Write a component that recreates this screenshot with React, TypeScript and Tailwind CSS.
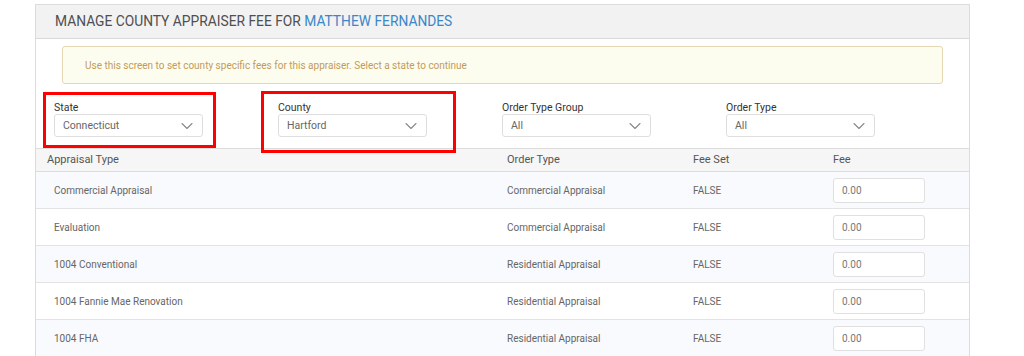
import { ChevronDown } from 'lucide-react';

const FILTERS = [
    { label: 'State', value: 'Connecticut', mark: 'state' },
    { label: 'County', value: 'Hartford', mark: 'county' },
    { label: 'Order Type Group', value: 'All', mark: '' },
    { label: 'Order Type', value: 'All', mark: '' },
];

const ROWS = [
    { type: 'Commercial Appraisal', order: 'Commercial Appraisal' },
    { type: 'Evaluation', order: 'Commercial Appraisal' },
    { type: '1004 Conventional', order: 'Residential Appraisal' },
    { type: '1004 Fannie Mae Renovation', order: 'Residential Appraisal' },
    { type: '1004 FHA', order: 'Residential Appraisal' },
];

export default function App() {
    return (
        <div className="w-[1024px] h-[356px] bg-white overflow-hidden pt-[4px] pl-[35px]" style={{ fontFamily: 'Roboto, "Liberation Sans", sans-serif' }}>
            <div className="w-[935px] border border-[#dcdcdc] border-b-0">

                {/* Header */}
                <div className="h-[34px] bg-[#f2f2f2] border-b border-[#d9d9d9] flex items-center pl-[19px]">
                    <h1 className="text-[13.8px] text-[#4f4f4f] uppercase">
                        Manage County Appraiser Fee For <span className="text-[#3a87c8]">Matthew Fernandes</span>
                    </h1>
                </div>

                {/* Info */}
                <div className="mx-[26px] mt-[7px] h-[38px] rounded-[3px] bg-[#fdfdef] border border-[#e6d6b4] flex items-center pl-[22px]">
                    <p className="text-[10px] text-[#c29b5a]">
                        Use this screen to set county specific fees for this appraiser. Select a state to continue
                    </p>
                </div>

                {/* Filters */}
                <div className="flex pl-[18px] pt-[17px] pb-[11px]">
                    {FILTERS.map((f) => (
                        <div key={f.label} className="relative w-[224px]">
                            <label className="block text-[10.5px] text-[#333] leading-[13px]">{f.label}</label>
                            <div className="w-[149px] h-[23px] border border-[#dedede] rounded-[3px] bg-white flex items-center justify-between pl-[8px] pr-[5px]">
                                <span className="text-[10.5px] text-[#666]">{f.value}</span>
                                <ChevronDown size={20} strokeWidth={1.3} className="text-[#888]" />
                            </div>
                            {f.mark === 'state' && (
                                <div className="absolute left-[-11px] top-[-9px] w-[173px] h-[56px] border-[3px] border-[#f00]" />
                            )}
                            {f.mark === 'county' && (
                                <div className="absolute left-[-17px] top-[-10px] w-[195px] h-[62px] border-[3px] border-[#f00]" />
                            )}
                        </div>
                    ))}
                </div>

                {/* Table */}
                <div className="border-t border-[#dcdcdc]">
                    <div className="grid grid-cols-[471px_186px_140px_1fr] h-[23px] items-center bg-[#f6f6f6] border-b border-[#dcdcdc] text-[11px] text-[#555]">
                        <div className="pl-[11px]">Appraisal Type</div>
                        <div>Order Type</div>
                        <div>Fee Set</div>
                        <div>Fee</div>
                    </div>
                    {ROWS.map((r, i) => (
                        <div
                            key={r.type}
                            className={`grid grid-cols-[471px_186px_140px_1fr] h-[37px] items-center border-b border-[#e3e3e3] text-[10px] text-[#666] ${i % 2 === 0 ? 'bg-[#f8fafd]' : 'bg-white'}`}
                        >
                            <div className="pl-[18px]">{r.type}</div>
                            <div>{r.order}</div>
                            <div>FALSE</div>
                            <div>
                                <div className="w-[92px] h-[25px] border border-[#e0e0e0] rounded-[3px] bg-white flex items-center pl-[8px] text-[10px] text-[#777]">
                                    0.00
                                </div>
                            </div>
                        </div>
                    ))}
                </div>
            </div>
        </div>
    );
}
